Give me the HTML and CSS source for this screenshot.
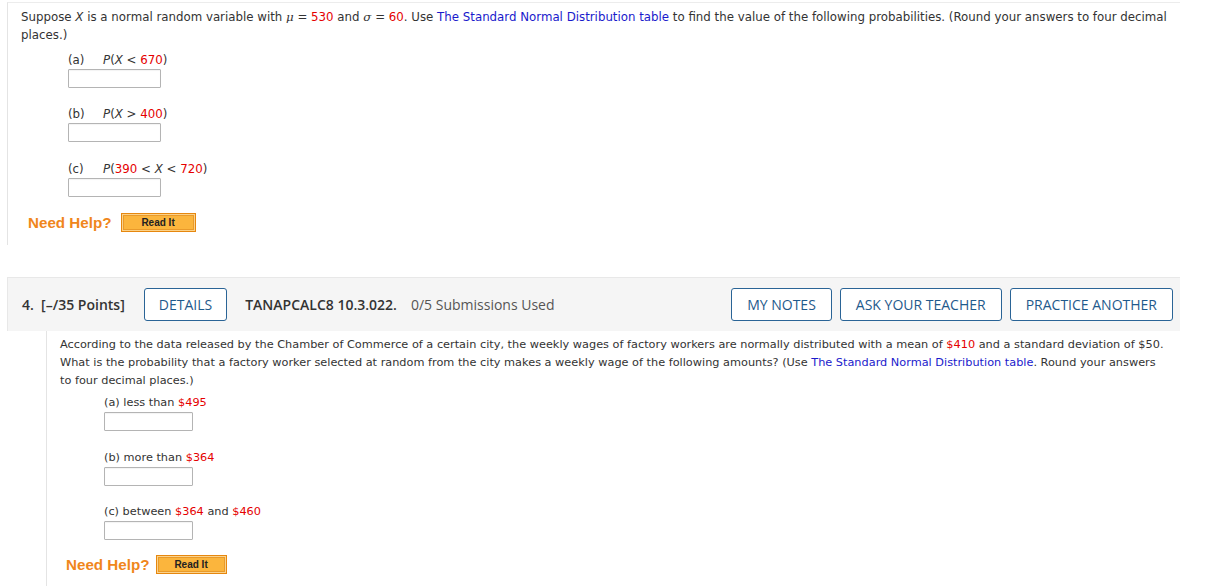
FILE: index.html
```html
<!DOCTYPE html>
<html>
<head>
<meta charset="utf-8">
<link rel="stylesheet" href="styles.css">
</head>
<body>
<div class="q3">
  <p class="prose">Suppose <i>X</i> is a normal random variable with <i class="greek">μ</i> = <span class="red">530</span> and <i class="greek">σ</i> = <span class="red">60</span>. Use <a class="link">The Standard Normal Distribution table</a> to find the value of the following probabilities. (Round your answers to four decimal places.)</p>
  <div class="parts parts3">
    <div class="part">
      <div class="label"><span class="tag">(a)</span><i>P</i>(<i>X</i> &lt; <span class="red">670</span>)</div>
      <div class="box"></div>
    </div>
    <div class="part">
      <div class="label"><span class="tag">(b)</span><i>P</i>(<i>X</i> &gt; <span class="red">400</span>)</div>
      <div class="box"></div>
    </div>
    <div class="part">
      <div class="label"><span class="tag">(c)</span><i>P</i>(<span class="red">390</span> &lt; <i>X</i> &lt; <span class="red">720</span>)</div>
      <div class="box"></div>
    </div>
  </div>
  <div class="help help3">
    <span class="needhelp">Need Help?</span>
    <span class="readit"><span class="readit-in">Read It</span></span>
  </div>
</div>

<div class="qhead">
  <span class="qnum">4.&nbsp; [–/35 Points]</span>
  <span class="btn btn-first">DETAILS</span>
  <span class="qcode">TANAPCALC8 10.3.022.</span>
  <span class="subs">0/5 Submissions Used</span>
  <span class="spacer"></span>
  <span class="btn">MY NOTES</span>
  <span class="btn">ASK YOUR TEACHER</span>
  <span class="btn">PRACTICE ANOTHER</span>
</div>

<div class="q4">
  <p class="prose">According to the data released by the Chamber of Commerce of a certain city, the weekly wages of factory workers are normally distributed with a mean of <span class="red">$410</span> and a standard deviation of $50. What is the probability that a factory worker selected at random from the city makes a weekly wage of the following amounts? (Use <a class="link">The Standard Normal Distribution table</a>. Round your answers to four decimal places.)</p>
  <div class="parts parts4">
    <div class="part">
      <div class="label">(a) less than <span class="red">$495</span></div>
      <div class="box"></div>
    </div>
    <div class="part">
      <div class="label">(b) more than <span class="red">$364</span></div>
      <div class="box"></div>
    </div>
    <div class="part">
      <div class="label">(c) between <span class="red">$364</span> and <span class="red">$460</span></div>
      <div class="box"></div>
    </div>
  </div>
  <div class="help help4">
    <span class="needhelp">Need Help?</span>
    <span class="readit"><span class="readit-in">Read It</span></span>
  </div>
</div>
</body>
</html>
```
FILE: styles.css
```css
html, body {
  margin: 0;
  padding: 0;
  background: #ffffff;
}
body {
  font-family: "DejaVu Sans", Verdana, sans-serif;
  font-size: 11.5px;
  color: #333333;
  overflow: hidden;
}
.q3 {
  margin: 2px 29px 0 7px;
  border-top: 1px solid #ececec;
  border-left: 1px solid #e4e4e4;
  padding: 5px 0 13px 13px;
  font-size: 11.8px;
}
.prose {
  margin: 0;
  line-height: 18px;
}
.red { color: #e50000; }
.link { color: #1a1acc; text-decoration: none; }
.greek { font-family: "DejaVu Serif", serif; }
.tag { display: inline-block; width: 35px; }
.parts3 { margin: 7px 0 0 47px; }
.parts3 .part:first-child { margin-bottom: 17px; }
.parts4 { margin: 4px 0 0 44px; }
.parts4 .part:nth-child(2) { margin-bottom: 17px; }
.part { margin-bottom: 18px; }
.label { line-height: 18px; }
.box {
  width: 91px;
  height: 17px;
  border: 1px solid #b4b4b4;
  border-radius: 1px;
  background: #fff;
  box-shadow: inset 0 1px 1px rgba(0,0,0,0.05);
}
.parts4 .box { width: 87px; }
.help {
  display: flex;
  align-items: center;
  gap: 9px;
}
.help3 { margin: -2px 0 0 7px; }
.help4 { margin: -3px 0 0 6px; gap: 6px; }
.needhelp {
  font-family: "Liberation Sans", Arial, sans-serif;
  font-weight: bold;
  font-size: 15.2px;
  color: #f0861c;
}
.readit {
  display: inline-block;
  border: 1px solid #e6870f;
  background: #fbd28a;
  padding: 1px;
}
.readit-in {
  display: block;
  width: 69px;
  height: 13px;
  line-height: 13px;
  text-align: center;
  background: #fbb53d;
  border: 1px solid #e99a2a;
  font-family: "Liberation Sans", Arial, sans-serif;
  font-weight: bold;
  font-size: 10px;
  color: #222;
}
.help4 .readit-in { width: 65px; }
.qhead {
  margin: 32px 29px 0 7px;
  height: 53px;
  background: #f5f5f5;
  border-top: 1px solid #e8e8e8;
  border-left: 1px solid #e8e8e8;
  display: flex;
  align-items: center;
  padding: 0 7px 0 14px;
  font-family: "Open Sans", sans-serif;
  font-size: 14px;
  color: #333;
}
.qnum { font-weight: 600; margin-right: 19px; }
.qcode { font-weight: 600; margin-left: 18px; margin-right: 14px; }
.subs { color: #555; }
.spacer { flex: 1; }
.btn {
  display: inline-flex;
  align-items: center;
  height: 31px;
  padding: 0 15px;
  border: 1px solid #2a6496;
  border-radius: 3px;
  background: #fff;
  color: #1f5a8c;
  margin-left: 8px;
}
.btn-first { margin-left: 0; padding: 0 14px; }
.q4 {
  margin: 0 0 0 46px;
  border-left: 1px solid #e4e4e4;
  padding: 5px 44px 20px 13px;
  min-height: 240px;
  font-size: 11.3px;
}
```
